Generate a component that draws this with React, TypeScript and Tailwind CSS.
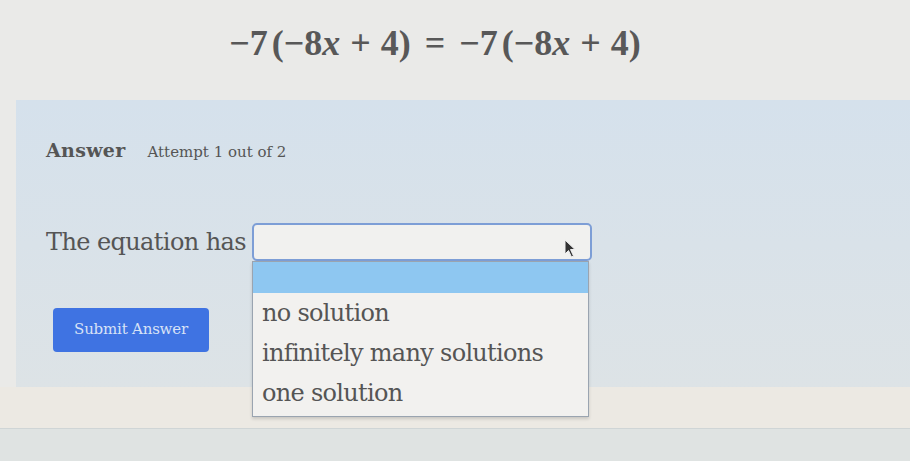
import React from 'react';

const serif = { fontFamily: 'Georgia, "DejaVu Serif", "Liberation Serif", serif' };

function Equation() {
    // −7(−8x + 4) = −7(−8x + 4)
    const side = (
        <span>
            −7<span className="ml-[4px]">(</span>−8<span className="italic">x</span>
            <span className="mx-[10px]">+</span>4)
        </span>
    );
    return (
        <div className="text-[36px] text-[#585858] font-bold" style={{ fontFamily: '"Liberation Serif", serif' }}>
            {side}
            <span className="mx-[14px]">=</span>
            {side}
        </div>
    );
}

function Cursor() {
    return (
        <svg width="14" height="20" viewBox="0 0 14 20" className="absolute right-[12px] top-[14px]">
            <path d="M1 1 L1 15 L4.5 11.5 L7.5 18 L9.5 17 L6.5 10.5 L11 10.5 Z" fill="#333" stroke="#eee" strokeWidth="1" />
        </svg>
    );
}

export default function App() {
    const options = ['no solution', 'infinitely many solutions', 'one solution'];

    return (
        <div className="w-[910px] h-[461px] overflow-hidden flex flex-col bg-[#eaeae8]" style={serif}>
            {/* equation header */}
            <div className="h-[100px] flex justify-center pt-[16px] pr-[40px]">
                <Equation />
            </div>

            {/* answer panel */}
            <div className="ml-[16px] h-[287px] bg-gradient-to-b from-[#d5e1ec] to-[#dde3e6] pt-[36px] px-[30px]">
                <div className="flex items-baseline gap-[22px] text-[#555]">
                    <span className="text-[19px] font-bold tracking-[0.3px]">Answer</span>
                    <span className="text-[15px]">Attempt 1 out of 2</span>
                </div>

                <div className="mt-[58px] flex items-center gap-[6px]">
                    <span className="text-[24px] text-[#555] tracking-[-0.6px]">The equation has</span>
                    <div className="relative">
                        <div className="w-[340px] h-[38px] rounded-[5px] border-2 border-[#7d9ed6] bg-[#f1f1ef] relative">
                            <Cursor />
                        </div>
                        {/* open dropdown list */}
                        <div className="absolute left-0 top-[38px] w-[337px] bg-[#f2f1ef] border border-[#9aa4b0] shadow-[0_2px_3px_rgba(0,0,0,0.15)] z-10">
                            <div className="h-[31px] bg-[#8ec7f1]" />
                            <div className="pb-[3px]">
                                {options.map((o) => (
                                    <div key={o} className="px-[9px] h-[40px] leading-[40px] text-[24px] text-[#555] tracking-[-0.7px]">
                                        {o}
                                    </div>
                                ))}
                            </div>
                        </div>
                    </div>
                </div>

                <button className="mt-[47px] ml-[7px] w-[156px] h-[44px] rounded-[4px] bg-[#3f73e2] text-[#d8e2f6] text-[15px] tracking-[-0.2px]">
                    Submit Answer
                </button>
            </div>

            {/* bottom strip */}
            <div className="h-[41px] bg-[#ece9e3]" />
            <div className="flex-1 border-t border-[#cfd5d6] bg-[#dfe3e2]" />
        </div>
    );
}
